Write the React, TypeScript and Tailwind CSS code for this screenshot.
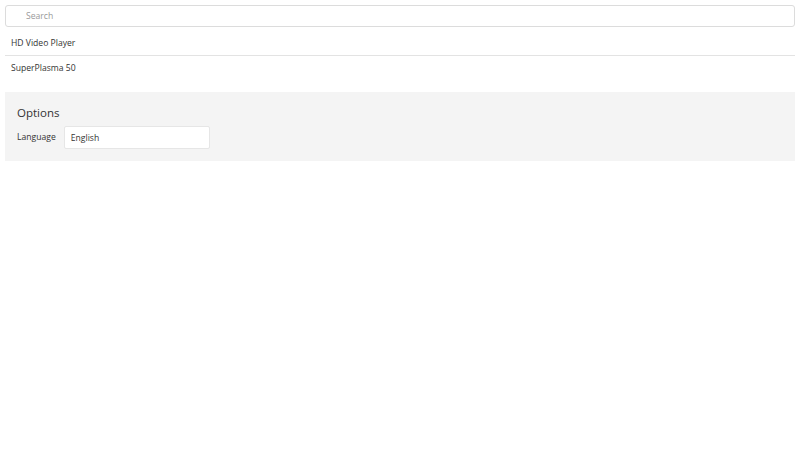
import { useState } from "react";

const PRODUCTS = ["HD Video Player", "SuperPlasma 50"];

export default function App() {
  const [query, setQuery] = useState("");
  const [language, setLanguage] = useState("English");

  const items = PRODUCTS.filter((p) =>
    p.toLowerCase().includes(query.toLowerCase()),
  );

  return (
    <div
      className="min-h-[450px] w-[800px] bg-white p-[5px] text-[8.6px] text-[#333]"
      style={{ fontFamily: '"Open Sans", "Noto Sans", sans-serif' }}
    >
      <input
        value={query}
        onChange={(e) => setQuery(e.target.value)}
        placeholder="Search"
        className="block h-[22px] w-full rounded-[3px] border border-[#dcdcdc] pl-[20px] text-[8.6px] outline-none placeholder:text-[#999]"
      />

      <ul className="mt-[4px]">
        {items.map((item, i) => (
          <li
            key={item}
            className={`flex h-[25px] items-center px-[6px] ${
              i < items.length - 1 ? "border-b border-[#e3e3e3]" : ""
            }`}
          >
            {item}
          </li>
        ))}
      </ul>

      {/* Options */}
      <div className="mt-[11px] bg-[#f4f4f4] px-[12px] pt-[13px] pb-[12px]">
        <h2 className="text-[11.5px] leading-[16px] text-[#333]">Options</h2>
        <div className="mt-[5px] flex items-center gap-[8px]">
          <label className="text-[8.6px]">Language</label>
          <input
            value={language}
            onChange={(e) => setLanguage(e.target.value)}
            className="h-[23px] w-[146px] rounded-[2px] border border-[#e6e6e6] bg-white px-[6px] text-[8.6px] outline-none"
          />
        </div>
      </div>
    </div>
  );
}
